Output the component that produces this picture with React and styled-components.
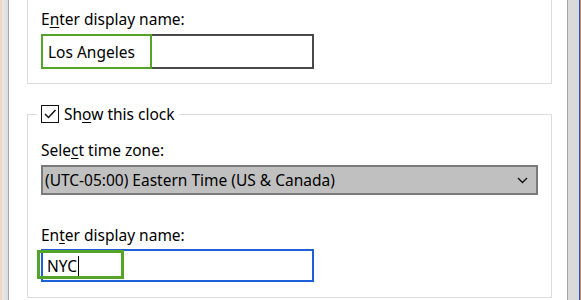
import React from 'react';
import styled, { createGlobalStyle } from 'styled-components';

const Global = createGlobalStyle`
  html, body { margin: 0; padding: 0; background: #fff; }
  body { font-family: "Noto Sans", "Open Sans", sans-serif; color: #000; }
`;

// window frame
const Frame = styled.div`
  display: flex;
  width: 581px;
  height: 300px;
  overflow: hidden;
`;

const LeftEdge = styled.div`
  width: 8px;
  flex: none;
  background: linear-gradient(to right, #f2d6c0 0 2px, #e9e9e9 2px, #dcdcdc 8px);
  border-right: 1px solid #a8a8a8;
`;

const RightEdge = styled.div`
  width: 13px;
  flex: none;
  border-left: 1px solid #a6a6a6;
  background: linear-gradient(to right, #dadada 0 11px, #1a57d0 11px 12px, #c98a5a 12px);
`;

const Content = styled.div`
  width: 525px;
  flex: none;
  padding: 0 15px 0 18px;
  background: #fff;
`;

// group boxes
const TopGroup = styled.div`
  border: 1px solid #dcdcdc;
  border-top: none;
  padding: 9px 13px 14px 13px;
`;

const Group = styled.fieldset`
  margin: 20px 0 0 0;
  border: 1px solid #dcdcdc;
  padding: 0 12px 15px 13px;
  min-width: 0;
`;

const Legend = styled.legend`
  display: flex;
  align-items: center;
  gap: 5px;
  height: 20px;
  padding: 0 4px;
  margin-left: -4px;
  font-size: 15.5px;
`;

const Check = styled.span`
  width: 16px;
  height: 16px;
  border: 1px solid #111;
  background: #fff;
  display: flex;
  align-items: center;
  justify-content: center;
`;

const Label = styled.div`
  font-size: 15.5px;
  line-height: 20px;
  margin-top: ${p => p.$top || 0}px;
  u { text-decoration-thickness: 1px; text-underline-offset: 2px; }
`;

const Field = styled.div`
  position: relative;
  width: 273px;
  height: ${p => p.$h}px;
  margin-top: ${p => p.$top}px;
  box-sizing: border-box;
  border: 2px solid ${p => (p.$focus ? '#1c5fd6' : '#4a4a4a')};
  background: #fff;
  display: flex;
  align-items: center;
  padding-left: ${p => p.$pad}px;
  font-size: 15.5px;
`;

const Caret = styled.span`
  display: inline-block;
  width: 0;
  height: 20px;
  border-left: 1px solid #000;
  margin-left: 1px;
`;

// annotation rectangle drawn over the field
const Mark = styled.div`
  position: absolute;
  box-sizing: border-box;
  border: ${p => p.$w}px solid #55a42a;
  left: ${p => p.$x}px;
  top: ${p => p.$y}px;
  width: ${p => p.$width}px;
  height: ${p => p.$height}px;
`;

const Select = styled.div`
  box-sizing: border-box;
  width: 497px;
  height: 30px;
  margin-top: 5px;
  border: 2px solid #7a7a7a;
  background: #c0c0c0;
  display: flex;
  align-items: center;
  justify-content: space-between;
  padding: 0 8px 0 2px;
  font-size: 15.5px;
`;

const Chevron = () => (
  <svg width="11" height="7" viewBox="0 0 11 7">
    <polyline points="1,1 5.5,5.5 10,1" fill="none" stroke="#111" strokeWidth="1.4" />
  </svg>
);

export default function App() {
  return (
    <>
      <Global />
      <Frame>
        <LeftEdge />
        <Content>
          <TopGroup>
            <Label>E<u>n</u>ter display name:</Label>
            <Field $h={35} $top={5} $pad={5}>
              Los Angeles
              <Mark $w={2} $x={-2} $y={-2} $width={111} $height={35} />
            </Field>
          </TopGroup>

          <Group>
            <Legend>
              <Check>
                <svg width="14" height="14" viewBox="0 0 14 14">
                  <polyline points="2,7 5.5,10.5 12.5,3" fill="none" stroke="#111" strokeWidth="1.5" />
                </svg>
              </Check>
              <span>Sh<u style={{ textUnderlineOffset: 2 }}>o</u>w this clock</span>
            </Legend>
            <Label $top={16}>Sele<u>c</u>t time zone:</Label>
            <Select>
              <span>(UTC-05:00) Eastern Time (US &amp; Canada)</span>
              <Chevron />
            </Select>
            <Label $top={30}>En<u>t</u>er display name:</Label>
            <Field $h={33} $top={4} $pad={4} $focus>
              NYC<Caret />
              <Mark $w={3} $x={-6} $y={-1} $width={87} $height={29} />
            </Field>
          </Group>
        </Content>
        <RightEdge />
      </Frame>
    </>
  );
}
